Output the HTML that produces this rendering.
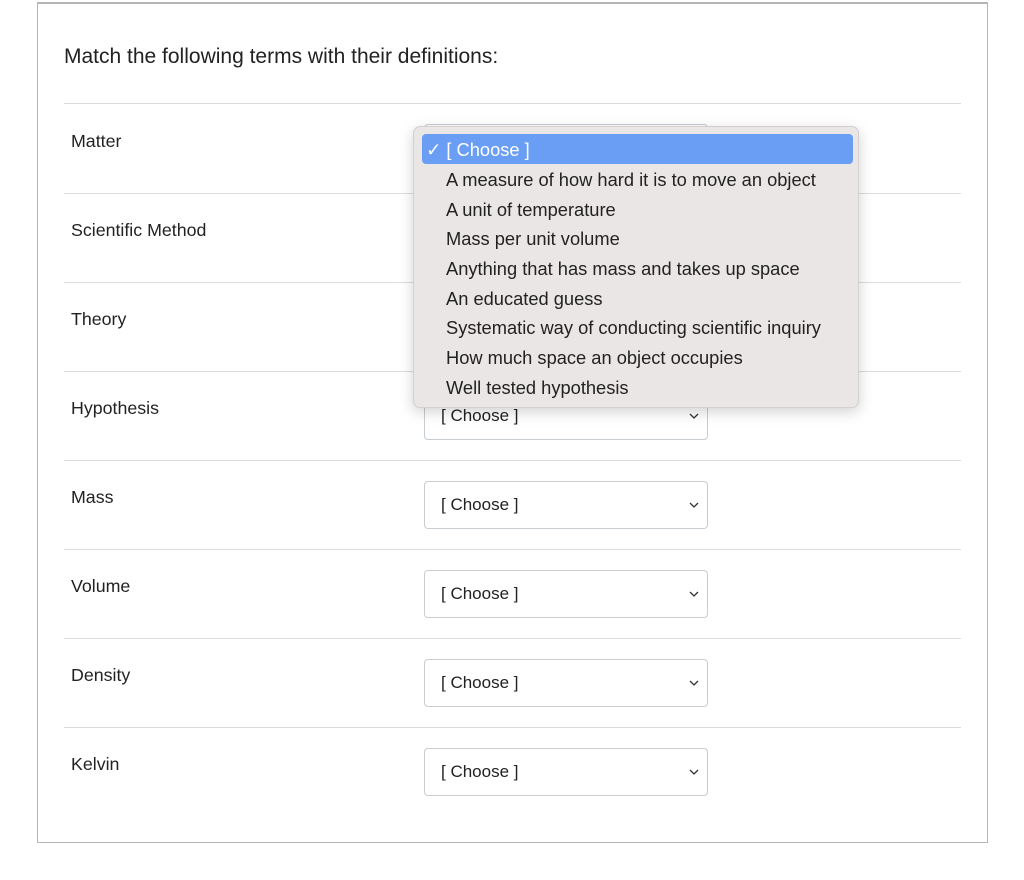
<!DOCTYPE html>
<html><head><style>
body{margin:0;width:1024px;height:880px;background:#fff;font-family:"Liberation Sans",sans-serif;position:relative;overflow:hidden}
.box{position:absolute;left:37px;top:2px;width:951px;height:841px;border:1px solid #b5b5b5;border-top:2px solid #b5b5b5;box-sizing:border-box}
.title{position:absolute;left:64px;top:45px;font-size:21px;color:#222}
.line{position:absolute;left:64px;width:897px;height:1px;background:#dcdcdc}
.lbl{position:absolute;left:71px;font-size:17.8px;color:#222}
.sel{position:absolute;left:424px;width:284px;height:48px;border:1px solid #c7cdd1;border-radius:4px;box-sizing:border-box;font-size:17px;color:#222;padding:13px 0 0 16px}
.sel svg{position:absolute;right:8px;top:20px}
.dd{position:absolute;left:413px;top:126px;width:446px;height:282px;background:#ebe6e6;border:1px solid #d4d0d0;border-radius:7px;box-sizing:border-box;box-shadow:0 4px 14px rgba(0,0,0,.18)}
.hl{position:absolute;left:8px;top:7px;width:431px;height:30px;background:#6a9ef5;border-radius:4px}
.opt{position:absolute;left:32px;font-size:18.3px;color:#222;white-space:nowrap}
</style></head><body>
<div class="box"></div>
<div class="title">Match the following terms with their definitions:</div>
<div class="line" style="top:103px"></div>
<div class="line" style="top:193px"></div>
<div class="line" style="top:282px"></div>
<div class="line" style="top:371px"></div>
<div class="line" style="top:460px"></div>
<div class="line" style="top:549px"></div>
<div class="line" style="top:638px"></div>
<div class="line" style="top:727px"></div>
<div class="lbl" style="top:131px">Matter</div>
<div class="lbl" style="top:220px">Scientific Method</div>
<div class="lbl" style="top:309px">Theory</div>
<div class="lbl" style="top:398px">Hypothesis</div>
<div class="lbl" style="top:487px">Mass</div>
<div class="lbl" style="top:576px">Volume</div>
<div class="lbl" style="top:665px">Density</div>
<div class="lbl" style="top:754px">Kelvin</div>
<div class="sel" style="top:124px"></div>
<div class="sel" style="top:392px">[ Choose ]<svg width="10" height="7" viewBox="0 0 10 7"><path d="M1 1L5 5L9 1" fill="none" stroke="#333" stroke-width="1.3"/></svg></div>
<div class="sel" style="top:481px">[ Choose ]<svg width="10" height="7" viewBox="0 0 10 7"><path d="M1 1L5 5L9 1" fill="none" stroke="#333" stroke-width="1.3"/></svg></div>
<div class="sel" style="top:570px">[ Choose ]<svg width="10" height="7" viewBox="0 0 10 7"><path d="M1 1L5 5L9 1" fill="none" stroke="#333" stroke-width="1.3"/></svg></div>
<div class="sel" style="top:659px">[ Choose ]<svg width="10" height="7" viewBox="0 0 10 7"><path d="M1 1L5 5L9 1" fill="none" stroke="#333" stroke-width="1.3"/></svg></div>
<div class="sel" style="top:748px">[ Choose ]<svg width="10" height="7" viewBox="0 0 10 7"><path d="M1 1L5 5L9 1" fill="none" stroke="#333" stroke-width="1.3"/></svg></div>
<div class="dd">
<div class="hl"></div>
<div class="opt" style="left:12px;top:12px;color:#fff">✓ [ Choose ]</div>
<div class="opt" style="top:42px">A measure of how hard it is to move an object</div>
<div class="opt" style="top:72px">A unit of temperature</div>
<div class="opt" style="top:101px">Mass per unit volume</div>
<div class="opt" style="top:131px">Anything that has mass and takes up space</div>
<div class="opt" style="top:161px">An educated guess</div>
<div class="opt" style="top:190px">Systematic way of conducting scientific inquiry</div>
<div class="opt" style="top:220px">How much space an object occupies</div>
<div class="opt" style="top:250px">Well tested hypothesis</div>
</div>
</body></html>
